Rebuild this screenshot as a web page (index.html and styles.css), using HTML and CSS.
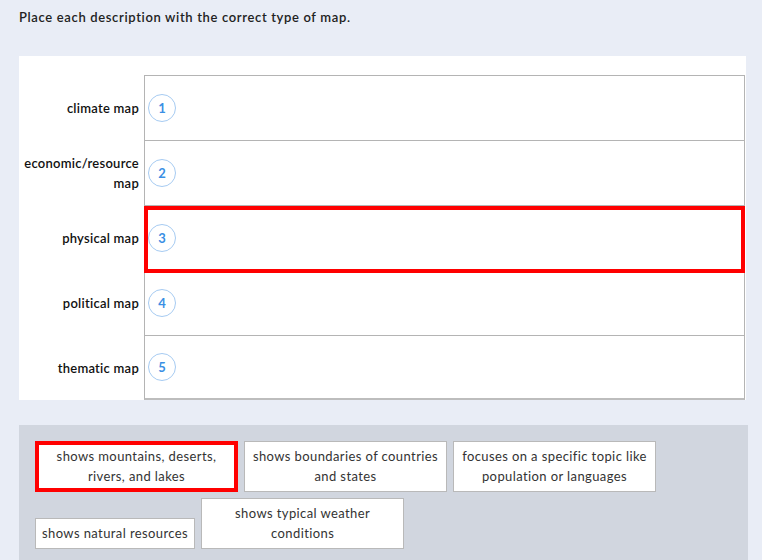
FILE: index.html
```html
<!DOCTYPE html>
<html>
<head>
<meta charset="utf-8">
<link rel="stylesheet" href="styles.css">
</head>
<body>
<div class="page">
  <p class="prompt">Place each description with the correct type of map.</p>
  <div class="matcher">
    <div class="row">
      <div class="label">climate map</div>
      <div class="zone"><span class="num">1</span></div>
    </div>
    <div class="row">
      <div class="label">economic/resource map</div>
      <div class="zone"><span class="num">2</span></div>
    </div>
    <div class="row">
      <div class="label">physical map</div>
      <div class="zone selected"><span class="num">3</span></div>
    </div>
    <div class="row">
      <div class="label">political map</div>
      <div class="zone"><span class="num">4</span></div>
    </div>
    <div class="row last">
      <div class="label">thematic map</div>
      <div class="zone"><span class="num">5</span></div>
    </div>
  </div>
  <div class="bank">
    <div class="card selected">shows mountains, deserts, rivers, and lakes</div>
    <div class="card">shows boundaries of countries and states</div>
    <div class="card">focuses on a specific topic like population or languages</div>
    <div class="card">shows natural resources</div>
    <div class="card">shows typical weather conditions</div>
  </div>
</div>
</body>
</html>
```

FILE: styles.css
```css
html, body {
  margin: 0;
  padding: 0;
  background: #e9edf6;
}
.page {
  width: 762px;
  height: 560px;
  overflow: hidden;
  padding: 0 16px 0 19px;
  box-sizing: border-box;
  font-family: Lato, "Liberation Sans", sans-serif;
  font-size: 13px;
  letter-spacing: 0.65px;
  color: #222;
}
.prompt {
  margin: 0;
  padding-top: 9px;
  height: 56px;
  box-sizing: border-box;
  line-height: 16px;
  font-weight: 600;
}
.matcher {
  background: #fff;
  padding-top: 19px;
  padding-right: 1px;
}
.row {
  display: grid;
  grid-template-columns: 125px 1fr;
  height: 65px;
}
.label {
  align-self: center;
  text-align: right;
  padding: 0 5px 0 4px;
  line-height: 20px;
  color: #111;
  font-weight: 600;
  letter-spacing: 0.25px;
}
.zone {
  position: relative;
  border: 1px solid #b4b4b4;
  border-bottom: none;
  display: flex;
  align-items: center;
  padding-left: 3px;
}
.row.last .zone {
  border-bottom: 2px solid #bdbdbd;
}
.zone.selected::after {
  content: "";
  position: absolute;
  z-index: 1;
  left: -1px;
  right: -1px;
  top: 0;
  bottom: -3px;
  border: 4px solid #ff0000;
}
.num {
  width: 28px;
  height: 28px;
  border: 1px solid #a6cbf2;
  border-radius: 50%;
  box-sizing: border-box;
  display: flex;
  align-items: center;
  justify-content: center;
  color: #3a8fe4;
  font-size: 13px;
  font-weight: 700;
  letter-spacing: 0;
}
.bank {
  margin-top: 25px;
  margin-right: -2px;
  background: #d1d6df;
  padding: 16px 17px 16px 16px;
  display: flex;
  flex-wrap: wrap;
  align-items: flex-end;
  gap: 6px 6px;
}
.card {
  max-width: 203px;
  box-sizing: border-box;
  background: #fff;
  border: 1px solid #b9b9b9;
  padding: 4px 6px 5px;
  text-align: center;
  line-height: 20px;
  letter-spacing: 0.4px;
  color: #333;
}
.card.selected {
  border: 4px solid #ff0000;
  padding: 1px 3px 2px;
}
```
